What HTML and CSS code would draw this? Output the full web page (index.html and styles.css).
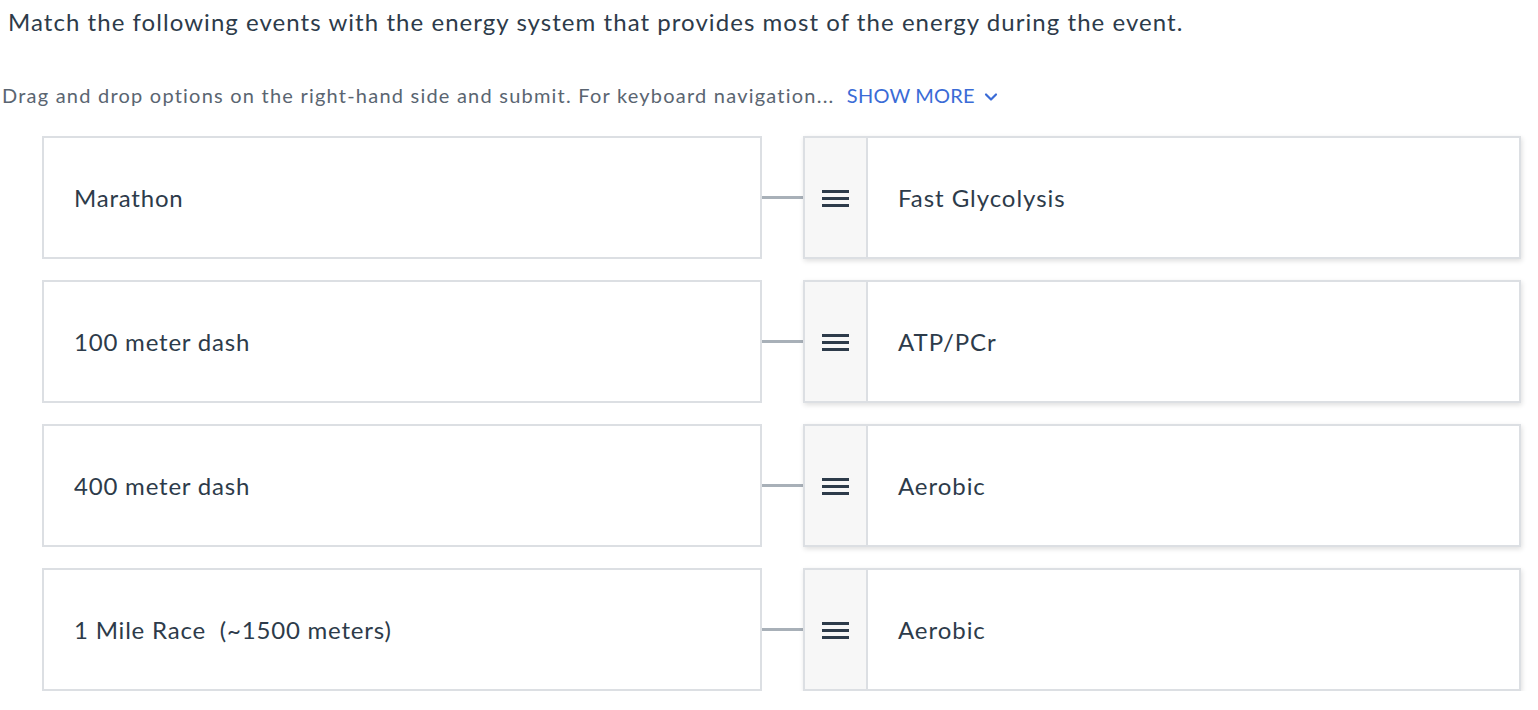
FILE: index.html
```html
<!DOCTYPE html>
<html lang="en">
<head>
<meta charset="utf-8">
<title>Match</title>
<link rel="stylesheet" href="styles.css">
</head>
<body>
<div class="page">
  <h1 class="title">Match the following events with the energy system that provides most of the energy during the event.</h1>
  <p class="hint">Drag and drop options on the right-hand side and submit. For keyboard navigation... <a class="more">SHOW MORE <svg class="chev" width="14" height="10" viewBox="0 0 14 10"><path d="M2 2.5 L7 7.5 L12 2.5" fill="none" stroke="#3a6bd6" stroke-width="2.2" stroke-linecap="round" stroke-linejoin="round"/></svg></a></p>
  <div class="rows">
    <div class="row">
      <div class="prompt">Marathon</div>
      <div class="link"></div>
      <div class="answer"><div class="handle"><span class="bars"><i></i><i></i><i></i></span></div><div class="label">Fast Glycolysis</div></div>
    </div>
    <div class="row">
      <div class="prompt">100 meter dash</div>
      <div class="link"></div>
      <div class="answer"><div class="handle"><span class="bars"><i></i><i></i><i></i></span></div><div class="label">ATP/PCr</div></div>
    </div>
    <div class="row">
      <div class="prompt">400 meter dash</div>
      <div class="link"></div>
      <div class="answer"><div class="handle"><span class="bars"><i></i><i></i><i></i></span></div><div class="label">Aerobic</div></div>
    </div>
    <div class="row">
      <div class="prompt">1 Mile Race&nbsp; (~1500 meters)</div>
      <div class="link"></div>
      <div class="answer"><div class="handle"><span class="bars"><i></i><i></i><i></i></span></div><div class="label">Aerobic</div></div>
    </div>
  </div>
</div>
</body>
</html>
```
FILE: styles.css
```css
html, body {
  margin: 0;
  padding: 0;
  background: #ffffff;
}
body {
  font-family: Lato, "Open Sans", "Liberation Sans", sans-serif;
  color: #2d3b4a;
}
.page {
  width: 1538px;
}
.title {
  margin: 0;
  padding: 7px 0 0 8px;
  font-size: 24px;
  line-height: 30px;
  font-weight: 400;
  letter-spacing: 1.05px;
  color: #2d3b4a;
}
.hint {
  margin: 0;
  padding: 45px 0 0 2px;
  font-size: 20px;
  line-height: 26px;
  letter-spacing: 1.22px;
  color: #5a6571;
}
.more {
  color: #3a6bd6;
  margin-left: 6px;
  letter-spacing: 0.2px;
  display: inline-flex;
  align-items: center;
  gap: 9px;
}
.chev {
  margin-top: 3px;
}
.rows {
  display: flex;
  flex-direction: column;
  gap: 21px;
  padding: 28px 0 0 42px;
}
.row {
  display: flex;
  align-items: stretch;
  height: 123px;
}
.prompt {
  box-sizing: border-box;
  width: 720px;
  border: 2px solid #dcdfe3;
  display: flex;
  align-items: center;
  padding-left: 30px;
  font-size: 24px;
  letter-spacing: 0.8px;
  color: #2d3b4a;
}
.link {
  width: 41px;
  display: flex;
  align-items: center;
}
.link::before {
  content: "";
  display: block;
  width: 100%;
  height: 3px;
  background: #a8b0b8;
}
.answer {
  box-sizing: border-box;
  width: 718px;
  border: 2px solid #dcdfe3;
  display: flex;
  box-shadow: 1px 2px 5px rgba(0, 0, 0, 0.13);
}
.handle {
  width: 61px;
  background: #f7f7f7;
  border-right: 2px solid #dcdfe3;
  display: flex;
  align-items: center;
  justify-content: center;
}
.bars {
  display: flex;
  flex-direction: column;
  gap: 4px;
  width: 27px;
  margin-top: 2px;
}
.bars i {
  display: block;
  height: 3px;
  background: #2d3b4a;
}
.label {
  display: flex;
  align-items: center;
  padding-left: 30px;
  font-size: 24px;
  letter-spacing: 0.95px;
  color: #2d3b4a;
}
```
